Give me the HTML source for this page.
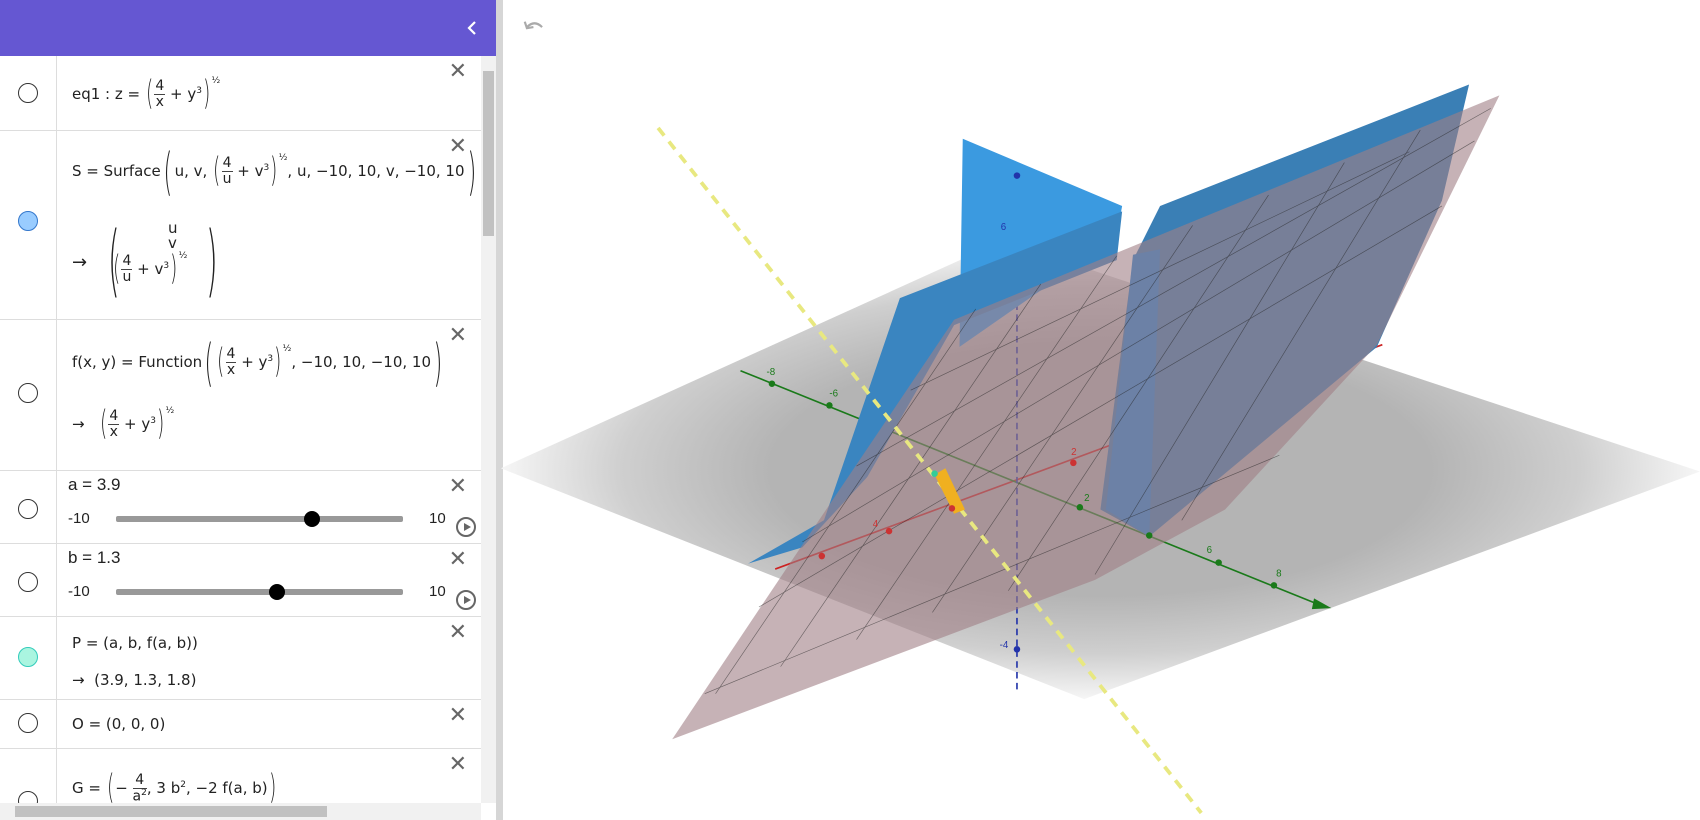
<!DOCTYPE html>
<html><head><meta charset="utf-8"><style>
*{margin:0;padding:0;box-sizing:border-box}
body{width:1700px;height:820px;overflow:hidden;background:#fff;font-family:"Liberation Sans",sans-serif;position:relative;color:#222}
.hdr{position:absolute;left:0;top:0;width:496px;height:56px;background:#6557d2}
.panel{position:absolute;left:0;top:56px;width:481px;height:747px;overflow:hidden}
.row{position:absolute;left:0;width:481px;border-bottom:1px solid #ddd}
.col{position:absolute;left:56px;top:0;bottom:0;border-left:1px solid #ddd}
.circ{position:absolute;left:18px;width:20px;height:20px;border-radius:50%;border:1.5px solid #333;background:#fff}
.x{position:absolute;right:14px;top:2px;font-size:22px;color:#666;font-weight:normal}
.t{position:absolute;left:72px;white-space:nowrap;font-family:"DejaVu Sans","Liberation Sans",sans-serif;font-size:15px}
.fr{display:inline-block;vertical-align:middle;text-align:center;line-height:1.05;font-size:14px}
.fr b{display:block;font-weight:normal;border-bottom:1px solid #444;padding:0 1px}
.bp{display:inline-block;transform:scale(1.3,2.4);font-weight:200;vertical-align:middle;font-size:14px;margin:0 2px}
.bp3{display:inline-block;transform:scale(1.5,3.4);font-weight:200;vertical-align:middle;margin:0 4px}
sup{font-size:9px}
.sl{position:absolute;font-size:17px;font-family:"Liberation Sans",sans-serif}
.trk{position:absolute;height:6px;background:#999;border-radius:2px}
.knob{position:absolute;width:16px;height:16px;border-radius:50%;background:#000}
.play{position:absolute;width:20px;height:20px;border:2px solid #666;border-radius:50%}
.play:after{content:"";position:absolute;left:6px;top:3.5px;border-left:7px solid #666;border-top:4.5px solid transparent;border-bottom:4.5px solid transparent}
</style></head><body>
<div class="hdr"><svg style="position:absolute;left:465px;top:20px" width="14" height="16"><path d="M10 2 L4 8 L10 14" stroke="#fff" stroke-width="2.2" fill="none"/></svg></div>
<div style="position:absolute;left:496px;top:0;width:7px;height:820px;background:#d6d6d6"></div>
<div style="position:absolute;left:481px;top:56px;width:15px;height:747px;background:#f1f1f1"></div>
<div style="position:absolute;left:483px;top:71px;width:11px;height:165px;background:#c1c1c1"></div>
<div style="position:absolute;left:0;top:803px;width:481px;height:17px;background:#f1f1f1"></div>
<div style="position:absolute;left:15px;top:806px;width:312px;height:11px;background:#c1c1c1"></div>

<div class="panel">
<div class="row" style="top:0;height:75px"><div class="col"></div><div class="circ" style="top:27px"></div><div class="x">✕</div>
<div class="t" style="top:20px">eq1 : z = <span class="bp">(</span><span class="fr"><b>4</b>x</span> + y<sup>3</sup><span class="bp">)</span><sup style="vertical-align:16px">½</sup></div></div>
<div class="row" style="top:75px;height:189px"><div class="col"></div><div class="circ" style="top:80px;background:#99ccff;border-color:#3377cc"></div><div class="x">✕</div>
<div class="t" style="top:22px">S = Surface<span class="bp3">(</span>u, v, <span class="bp">(</span><span class="fr"><b>4</b>u</span> + v<sup>3</sup><span class="bp">)</span><sup style="vertical-align:16px">½</sup>, u, −10, 10, v, −10, 10<span class="bp3">)</span></div>
<div class="t" style="top:88px"><span style="position:absolute;top:33px;font-size:18px">→</span>
<span style="position:absolute;left:36px;top:-2px;font-size:30px;transform:scaleY(2.6);transform-origin:top;font-weight:100">(</span>
<span style="position:absolute;left:96px;top:0">u</span><span style="position:absolute;left:96px;top:15px">v</span>
<span style="position:absolute;left:40px;top:32px;width:120px"><span class="bp">(</span><span class="fr"><b>4</b>u</span> + v<sup>3</sup><span class="bp">)</span><sup style="vertical-align:16px">½</sup></span>
<span style="position:absolute;left:134px;top:-2px;font-size:30px;transform:scaleY(2.6);transform-origin:top;font-weight:100">)</span></div></div>
<div class="row" style="top:264px;height:151px"><div class="col"></div><div class="circ" style="top:63px"></div><div class="x">✕</div>
<div class="t" style="top:24px">f(x, y) = Function<span class="bp3">(</span><span class="bp">(</span><span class="fr"><b>4</b>x</span> + y<sup>3</sup><span class="bp">)</span><sup style="vertical-align:16px">½</sup>, −10, 10, −10, 10<span class="bp3">)</span></div>
<div class="t" style="top:86px">→ &nbsp; <span class="bp">(</span><span class="fr"><b>4</b>x</span> + y<sup>3</sup><span class="bp">)</span><sup style="vertical-align:16px">½</sup></div></div>
<div class="row" style="top:415px;height:73px"><div class="col"></div><div class="circ" style="top:28px"></div><div class="x">✕</div>
<div class="sl" style="left:68px;top:4px">a = 3.9</div><div class="sl" style="left:68px;top:39px;font-size:15px">-10</div><div class="sl" style="left:429px;top:39px;font-size:15px">10</div>
<div class="trk" style="left:116px;top:45px;width:287px"></div><div class="knob" style="left:304px;top:40px"></div><div class="play" style="left:456px;top:46px"></div></div>
<div class="row" style="top:488px;height:73px"><div class="col"></div><div class="circ" style="top:28px"></div><div class="x">✕</div>
<div class="sl" style="left:68px;top:4px">b = 1.3</div><div class="sl" style="left:68px;top:39px;font-size:15px">-10</div><div class="sl" style="left:429px;top:39px;font-size:15px">10</div>
<div class="trk" style="left:116px;top:45px;width:287px"></div><div class="knob" style="left:269px;top:40px"></div><div class="play" style="left:456px;top:46px"></div></div>
<div class="row" style="top:561px;height:83px"><div class="col"></div><div class="circ" style="top:30px;background:#aaf5e0;border-color:#3cb;"></div><div class="x">✕</div>
<div class="t" style="top:17px">P = (a, b, f(a, b))</div><div class="t" style="top:54px">→ &nbsp;(3.9, 1.3, 1.8)</div></div>
<div class="row" style="top:644px;height:49px"><div class="col"></div><div class="circ" style="top:13px"></div><div class="x">✕</div>
<div class="t" style="top:15px">O = (0, 0, 0)</div></div>
<div class="row" style="top:693px;height:60px;border:0"><div class="col"></div><div class="circ" style="top:42px"></div><div class="x">✕</div>
<div class="t" style="top:24px">G = <span class="bp">(</span>− <span class="fr"><b>4</b>a<sup>2</sup></span>, 3 b<sup>2</sup>, −2 f(a, b)<span class="bp">)</span></div></div>
</div>

<svg style="position:absolute;left:0;top:0" width="1700" height="820" viewBox="0 0 1568 756.5" preserveAspectRatio="none">
<defs><radialGradient id="g" cx="0.5" cy="0.5" r="0.5"><stop offset="0.55" stop-color="#b4b4b4"/><stop offset="0.8" stop-color="#cfcfcf"/><stop offset="1" stop-color="#f6f6f6"/></radialGradient></defs>
<path d="M486 25 Q493 18 500 25 M484 20 L486 26 L492 25" stroke="#aaa" stroke-width="2" fill="none"/>
<polygon points="462,432 925,222 1568,435 1000,645" fill="url(#g)"/>
<line x1="715" y1="525" x2="1275" y2="318" stroke="#c22" stroke-width="1.5"/>
<line x1="683" y1="342" x2="1222" y2="560" stroke="#1a7a1a" stroke-width="1.5"/>
<polygon points="1212,552 1228,561 1210,562" fill="#1a7a1a"/>
<line x1="938" y1="150" x2="938" y2="636" stroke="#2233aa" stroke-width="1.5" stroke-dasharray="6,4"/>
<path d="M888 128 L1035 190 Q1030 225 1000 240 L885 320 Z" fill="#3b9ae0"/>
<path d="M690 520 L760 480 L830 275 L1035 195 L1030 240 L880 300 L800 440 L740 505 Z" fill="#3a85c0"/>
<path d="M1070 190 L1355 78 L1330 185 L1270 320 L1060 495 L1015 470 L1045 240 Z" fill="#3a7fb5"/>
<path d="M1020 470 L1045 235 L1070 230 L1060 495 Z" fill="#1f86d6"/>
<polygon points="620,682 1010,535 1130,470 1270,318 1383,88 880,295 725,525" fill="#a07e86" fill-opacity="0.6"/>
<g stroke="#222" stroke-width="0.6" opacity="0.55">
<line x1="660" y1="640" x2="900" y2="285"/><line x1="720" y1="615" x2="960" y2="262"/><line x1="790" y1="590" x2="1030" y2="236"/><line x1="860" y1="565" x2="1100" y2="208"/><line x1="930" y1="545" x2="1170" y2="180"/><line x1="1010" y1="530" x2="1240" y2="150"/><line x1="1090" y1="480" x2="1310" y2="120"/>
<line x1="700" y1="560" x2="1330" y2="190"/><line x1="740" y1="500" x2="1360" y2="130"/><line x1="790" y1="430" x2="1375" y2="100"/><line x1="840" y1="360" x2="1300" y2="140"/><line x1="650" y1="640" x2="1180" y2="420"/>
</g>
<line x1="607" y1="118" x2="1108" y2="750" stroke="#e8e880" stroke-width="3.5" stroke-dasharray="9,7"/>
<polygon points="862,438 872,432 890,470 880,474" fill="#f0b020"/>
<circle cx="862" cy="437" r="3" fill="#3c9"/>
<g fill="#1a7a1a" font-size="9"><circle cx="712" cy="354" r="3"/><circle cx="765" cy="374" r="3"/><circle cx="996" cy="468" r="3"/><circle cx="1060" cy="494" r="3"/><circle cx="1124" cy="519" r="3"/><circle cx="1175" cy="540" r="3"/>
<text x="707" y="346">-8</text><text x="765" y="366">-6</text><text x="1000" y="462">2</text><text x="1113" y="510">6</text><text x="1177" y="532">8</text></g>
<g fill="#c33" font-size="9"><circle cx="990" cy="427" r="3"/><circle cx="878" cy="469" r="3"/><circle cx="820" cy="490" r="3"/><circle cx="758" cy="513" r="3"/><text x="988" y="420">2</text><text x="805" y="486">4</text></g>
<g fill="#2233aa" font-size="9"><circle cx="938" cy="162" r="3"/><circle cx="938" cy="599" r="3"/><text x="922" y="598">-4</text><text x="923" y="212">6</text></g>
</svg>
</body></html>
